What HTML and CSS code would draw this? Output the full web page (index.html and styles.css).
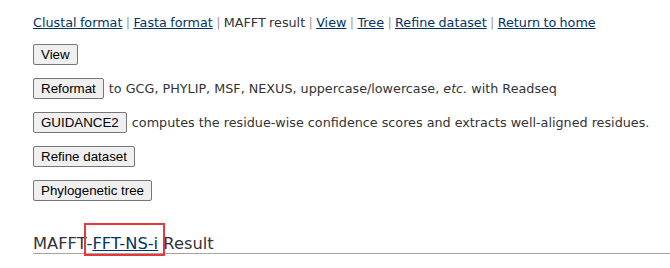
FILE: index.html
```html
<!DOCTYPE html>
<html>
<head>
<meta charset="utf-8">
<link rel="stylesheet" href="styles.css">
</head>
<body>
<div class="page">
  <p class="nav">
    <a href="#">Clustal format</a> <span class="sep">|</span>
    <a href="#">Fasta format</a> <span class="sep">|</span>
    MAFFT result <span class="sep">|</span>
    <a href="#">View</a> <span class="sep">|</span>
    <a href="#">Tree</a> <span class="sep">|</span>
    <a href="#">Refine dataset</a> <span class="sep">|</span>
    <a href="#">Return to home</a>
  </p>
  <p class="row"><button class="btn">View</button></p>
  <p class="row"><button class="btn">Reformat</button> to GCG, PHYLIP, MSF, NEXUS, uppercase/lowercase, <i>etc.</i> with Readseq</p>
  <p class="row"><button class="btn">GUIDANCE2</button> computes the residue-wise confidence scores and extracts well-aligned residues.</p>
  <p class="row"><button class="btn">Refine dataset</button></p>
  <p class="row"><button class="btn">Phylogenetic tree</button></p>
  <h2 class="result">MAFFT<span class="mark">-<a href="#">FFT-NS-i</a></span> Result</h2>
</div>
</body>
</html>
```
FILE: styles.css
```css
html, body {
  margin: 0;
  padding: 0;
  background: #ffffff;
}
.page {
  padding: 15px 0 16px 33px;
  font-family: "DejaVu Sans", Verdana, sans-serif;
  font-size: 12.75px;
  color: #333333;
}
.nav {
  margin: 0;
  line-height: 16px;
  word-spacing: -0.7px;
}
.nav a, .result a {
  color: #003366;
  text-decoration: underline;
}
.sep {
  color: #9a9a9a;
}
.row {
  margin: 13px 0 0 0;
  height: 21px;
  line-height: 21px;
  white-space: nowrap;
}
.btn {
  font-family: "Liberation Sans", Arial, sans-serif;
  font-size: 13.333px;
  color: #000000;
  background: #efefef;
  border: 1px solid #767676;
  border-radius: 2px;
  padding: 1px 7px;
  height: 21px;
  margin: 0 1px 0 0;
  line-height: 17px;
  vertical-align: top;
  word-spacing: normal;
}
.result {
  margin: 33px 0 0 0;
  font-size: 16.3px;
  font-weight: normal;
  line-height: 19px;
  padding-bottom: 0;
  border-bottom: 1px solid #a5a5a5;
  color: #333333;
}
.mark {
  position: relative;
  display: inline-block;
  line-height: 19px;
}
.mark::after {
  content: "";
  position: absolute;
  box-sizing: border-box;
  left: -3px;
  right: -7px;
  top: -11px;
  height: 33px;
  border: 2px solid #e8383b;
}
```
